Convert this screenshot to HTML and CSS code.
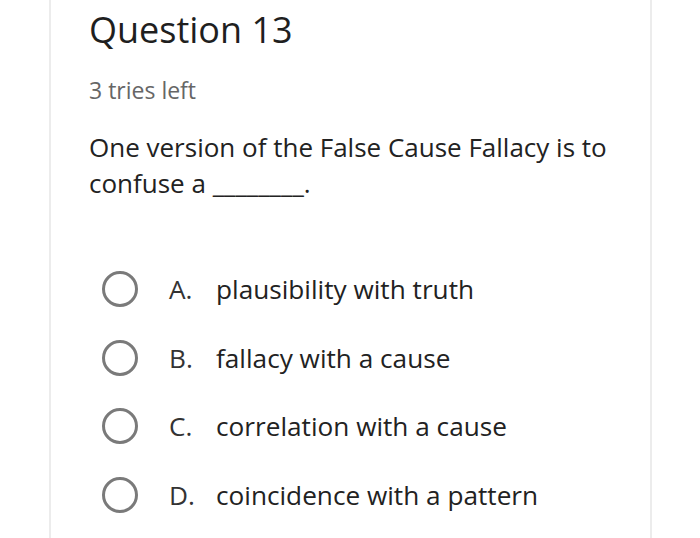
FILE: index.html
```html
<!DOCTYPE html>
<html>
<head>
<meta charset="utf-8">
<link rel="stylesheet" href="styles.css">
</head>
<body>
<div class="card">
  <h1 class="title">Question 13</h1>
  <p class="tries">3 tries left</p>
  <p class="prompt">One version of the False Cause Fallacy is to confuse a ________.</p>
  <ul class="options">
    <li class="option"><span class="radio"></span><span class="letter">A.</span><span class="text">plausibility with truth</span></li>
    <li class="option"><span class="radio"></span><span class="letter">B.</span><span class="text">fallacy with a cause</span></li>
    <li class="option"><span class="radio"></span><span class="letter">C.</span><span class="text">correlation with a cause</span></li>
    <li class="option"><span class="radio"></span><span class="letter">D.</span><span class="text">coincidence with a pattern</span></li>
  </ul>
</div>
</body>
</html>
```

FILE: styles.css
```css
html, body {
  margin: 0;
  padding: 0;
  background: #ffffff;
}
body {
  font-family: "Open Sans", "Noto Sans", sans-serif;
  color: #222;
  height: 538px;
  overflow: hidden;
}
.card {
  margin-left: 49px;
  width: 603px;
  height: 538px;
  border-left: 2px solid #ececec;
  border-right: 2px solid #ececec;
  padding: 0 30px 0 38px;
  box-sizing: border-box;
}
.title {
  margin: 0;
  padding-top: 7px;
  font-size: 36px;
  font-weight: 400;
  line-height: 46px;
  color: #1f1f1f;
}
.tries {
  margin: 22px 0 0;
  font-size: 23px;
  line-height: 30px;
  color: #666;
}
.prompt {
  margin: 24px 0 0;
  font-size: 26px;
  line-height: 36px;
  color: #222;
}
.options {
  list-style: none;
  margin: 54px 0 0;
  padding: 0;
}
.option {
  display: flex;
  align-items: center;
  height: 68.5px;
  font-size: 26.2px;
}
.radio {
  width: 30px;
  height: 30px;
  border: 3px solid #7a7a7a;
  border-radius: 50%;
  margin-left: 13px;
  flex: none;
}
.letter {
  margin-left: 31px;
  width: 47px;
  color: #333;
}
.text {
  color: #222;
}
```
